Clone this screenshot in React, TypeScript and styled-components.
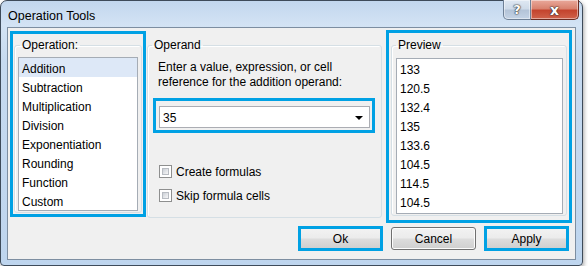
import React from "react";
import styled, { createGlobalStyle } from "styled-components";

const operations = [
  "Addition",
  "Subtraction",
  "Multiplication",
  "Division",
  "Exponentiation",
  "Rounding",
  "Function",
  "Custom",
];

const previewValues = ["133", "120.5", "132.4", "135", "133.6", "104.5", "114.5", "104.5"];

const HIGHLIGHT = "#00a1e4";

const GlobalStyle = createGlobalStyle`
  html, body {
    margin: 0;
    padding: 0;
    background: #ffffff;
  }
  body {
    font-family: "Liberation Sans", Arial, sans-serif;
    font-size: 12px;
    color: #000;
  }
`;

const Window = styled.div`
  width: 583px;
  height: 266px;
  box-sizing: border-box;
  display: flex;
  flex-direction: column;
  padding: 0 6px 5px 6px;
  border: 1px solid #3e4b5a;
  border-radius: 7px 7px 4px 4px;
  background: linear-gradient(to bottom, #c2d7ee 0px, #d3e3f4 24px, #c6daf0 60px, #bed5ee 100%);
  box-shadow: 1px 2px 4px rgba(0, 0, 0, 0.35);
`;

const TitleBar = styled.div`
  height: 26px;
  display: flex;
  align-items: center;
  padding-left: 1px;
`;

const Title = styled.span`
  font-family: "Liberation Sans", Arial, sans-serif;
  font-size: 12.5px;
  color: #000;
  margin-top: 3px;
`;

const CaptionButtons = styled.div`
  margin-left: auto;
  margin-right: -3px;
  align-self: flex-start;
  margin-top: -1px;
  display: flex;
`;

const CaptionButton = styled.div<{ $close?: boolean }>`
  width: ${(p) => (p.$close ? 48 : 28)}px;
  height: 20px;
  box-sizing: border-box;
  display: flex;
  align-items: center;
  justify-content: center;
  border: 1px solid ${(p) => (p.$close ? "#6b2c22" : "#6e8096")};
  border-top: none;
  border-radius: ${(p) => (p.$close ? "0 0 5px 0" : "0 0 0 5px")};
  border-left: ${(p) => (p.$close ? "none" : undefined)};
  background: ${(p) =>
    p.$close
      ? "linear-gradient(to bottom, #e9a99b 0%, #d9826f 45%, #c4442e 55%, #d0624b 100%)"
      : "linear-gradient(to bottom, #dfe8f3 0%, #cfdbe9 45%, #b4c4d8 55%, #c4d3e5 100%)"};
  box-shadow: inset 0 0 0 1px rgba(255, 255, 255, 0.45);
  color: #fff;
  font-family: "DejaVu Sans", sans-serif;
  font-weight: bold;
  font-size: ${(p) => (p.$close ? 14 : 13)}px;
  text-shadow: 0 0 1px #2a2a2a, 0 0 1px #2a2a2a, 0 0 2px #444;
  line-height: 1;
`;

const Client = styled.div`
  flex: 1;
  border: 1px solid #7d8ea1;
  background: #f0f0f0;
  display: flex;
  flex-direction: column;
`;

const TopRow = styled.div`
  display: flex;
  align-items: flex-start;
`;

const Highlight = styled.div<{ $w: number; $h: number }>`
  width: ${(p) => p.$w}px;
  height: ${(p) => p.$h}px;
  box-sizing: border-box;
  border: 3px solid ${HIGHLIGHT};
  display: flex;
  flex-direction: column;
`;

const Group = styled.fieldset<{ $w: number; $h: number }>`
  width: ${(p) => p.$w}px;
  height: ${(p) => p.$h}px;
  box-sizing: border-box;
  margin: 0;
  padding: 0;
  border: 1px solid #d5dfe5;
  border-radius: 3px;
  box-shadow: inset 1px 1px 0 #fff;
  min-inline-size: 0;
`;

const Legend = styled.legend`
  padding: 1px 2px 0;
  margin-left: 4px;
  font-size: 12px;
  line-height: 15px;
  color: #000;
`;

const ListBox = styled.div<{ $w: number; $h: number }>`
  width: ${(p) => p.$w}px;
  height: ${(p) => p.$h}px;
  box-sizing: border-box;
  border: 1px solid #a5acb5;
  background: #fff;
  margin: 4px 0 0 3px;
`;

const ListItem = styled.div<{ $selected?: boolean }>`
  height: 19px;
  box-sizing: border-box;
  padding: 3px 0 0 3px;
  line-height: 16px;
  background: ${(p) => (p.$selected ? "#dde8f7" : "transparent")};
  white-space: nowrap;
`;

const Prompt = styled.div`
  margin: 7px 0 0 10px;
  line-height: 15px;
`;

const ComboWrap = styled.div`
  width: 222px;
  height: 35px;
  box-sizing: border-box;
  border: 3px solid ${HIGHLIGHT};
  margin: 8px 0 0 5px;
  padding: 5px 0 0 3px;
`;

const Combo = styled.div`
  width: 211px;
  height: 22px;
  box-sizing: border-box;
  border: 1px solid #abadb3;
  background: #fff;
  display: flex;
  align-items: center;
  padding: 1px 6px 0 3px;
`;

const ComboValue = styled.span`
  flex: 1;
`;

const Arrow = styled.span`
  width: 0;
  height: 0;
  border-left: 4px solid transparent;
  border-right: 4px solid transparent;
  border-top: 4px solid #000;
`;

const CheckRow = styled.label<{ $first?: boolean }>`
  display: flex;
  align-items: center;
  gap: 4px;
  margin: ${(p) => (p.$first ? "31px" : "9px")} 0 0 11px;
  height: 15px;
`;

const CheckBox = styled.span`
  width: 13px;
  height: 13px;
  box-sizing: border-box;
  border: 1px solid #8e8f8f;
  background: #fff;
  padding: 2px;
  display: inline-flex;
  &::after {
    content: "";
    flex: 1;
    background: linear-gradient(135deg, #cbcfd5 0%, #e6e8eb 60%, #f6f6f6 100%);
    border: 1px solid #b8bcc2;
    box-sizing: border-box;
  }
`;

const ButtonRow = styled.div`
  display: flex;
  justify-content: flex-end;
  align-items: center;
  gap: 8px;
  margin-top: 3px;
  padding-right: 6px;
  height: 25px;
`;

const Button = styled.button<{ $highlight?: boolean }>`
  width: 85px;
  height: ${(p) => (p.$highlight ? 25 : 23)}px;
  box-sizing: border-box;
  font-family: "Liberation Sans", Arial, sans-serif;
  font-size: 12px;
  color: #000;
  padding: 1px 0 0;
  border: ${(p) => (p.$highlight ? `3px solid ${HIGHLIGHT}` : "1px solid #707070")};
  border-radius: ${(p) => (p.$highlight ? "0" : "3px")};
  background: linear-gradient(to bottom, #f2f2f2 0%, #ebebeb 49%, #dddddd 51%, #cfcfcf 100%);
  box-shadow: ${(p) => (p.$highlight ? "none" : "inset 0 0 0 1px #fcfcfc")};
`;

export default function App() {
  return (
    <>
      <GlobalStyle />
      <Window>
        <TitleBar>
          <Title>Operation Tools</Title>
          <CaptionButtons>
            <CaptionButton>?</CaptionButton>
            <CaptionButton $close>x</CaptionButton>
          </CaptionButtons>
        </TitleBar>
        <Client>
          <TopRow>
            <Highlight $w={136} $h={186} style={{ margin: "3px 0 0 2px" }}>
              <Group $w={128} $h={176} style={{ margin: "3px 0 0 1px" }}>
                <Legend style={{ marginLeft: 5 }}>Operation:</Legend>
                <ListBox $w={120} $h={154}>
                  {operations.map((op, i) => (
                    <ListItem key={op} $selected={i === 0}>
                      {op}
                    </ListItem>
                  ))}
                </ListBox>
              </Group>
            </Highlight>
            <Group $w={235} $h={181} style={{ margin: "9px 0 0 1px" }}>
              <Legend>Operand</Legend>
              <Prompt>
                Enter a value, expression, or cell
                <br />
                reference for the addition operand:
              </Prompt>
              <ComboWrap>
                <Combo>
                  <ComboValue>35</ComboValue>
                  <Arrow />
                </Combo>
              </ComboWrap>
              <CheckRow $first>
                <CheckBox />
                Create formulas
              </CheckRow>
              <CheckRow>
                <CheckBox />
                Skip formula cells
              </CheckRow>
            </Group>
            <Highlight $w={186} $h={193} style={{ margin: "2px 0 0 4px" }}>
              <Group $w={176} $h={179} style={{ margin: "4px 0 0 2px" }}>
                <Legend>Preview</Legend>
                <ListBox $w={167} $h={156} style={{ marginTop: 5, marginLeft: 4 }}>
                  {previewValues.map((v, i) => (
                    <ListItem key={i}>{v}</ListItem>
                  ))}
                </ListBox>
              </Group>
            </Highlight>
          </TopRow>
          <ButtonRow>
            <Button $highlight>Ok</Button>
            <Button>Cancel</Button>
            <Button $highlight>Apply</Button>
          </ButtonRow>
        </Client>
      </Window>
    </>
  );
}
